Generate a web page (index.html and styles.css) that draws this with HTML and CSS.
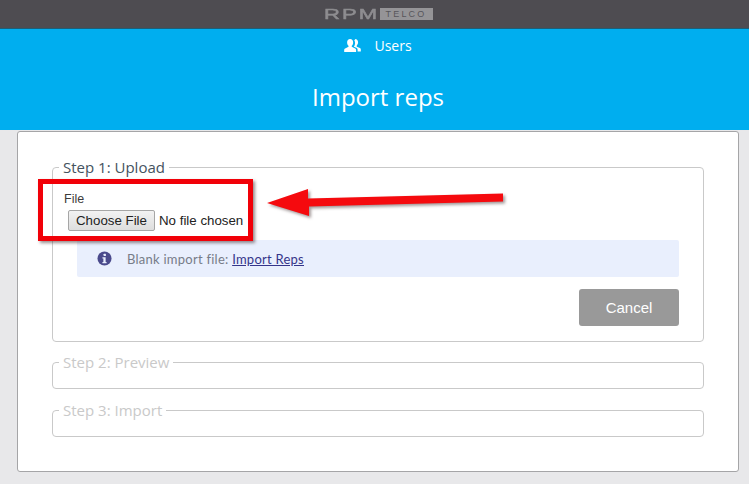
FILE: index.html
```
<!DOCTYPE html>
<html lang="en">
<head>
<meta charset="utf-8">
<title>Import reps</title>
<link rel="stylesheet" href="styles.css">
</head>
<body>
<header class="topbar">
  <div class="logo"><span class="logo-rpm">RPM</span><span class="logo-telco">TELCO</span></div>
</header>
<section class="hero">
  <nav class="crumb">
    <svg class="users-icon" viewBox="0 0 18 15" width="17" height="15" aria-hidden="true"><path fill="#fff" d="M6.500 0.600c2 0 3.200 1.500 3.200 3.600 0 1.400-.6 2.800-1.500 3.500v1.200l3.600 1.700c.8.4 1 .9 1 1.600v2.200H.2v-2.200c0-.7.2-1.200 1-1.600l3.600-1.700V7.700C3.900 7 3.300 5.600 3.300 4.200c0-2.100 1.200-3.600 3.200-3.600z"/><path fill="#fff" d="M11.800 0.600c1.900 0 3.100 1.500 3.100 3.500 0 1.300-.5 2.600-1.400 3.300v1.300l3.300 1.500c.7.300 1 .8 1 1.500v2.200h-3.400v-1.800c0-1-.5-1.700-1.400-2.100l-2.600-1.200c.8-1 1.300-2.400 1.300-3.900 0-1.100-.3-2-.8-2.900.6-.9 1.500-1.400 2.700-1.400z"/></svg>
    <span>Users</span>
  </nav>
  <h1>Import reps</h1>
</section>
<main class="page">
  <div class="card">
    <fieldset class="step step-active">
      <legend>Step 1: Upload</legend>
      <div class="step-body">
        <div class="file-block">
          <label class="file-label">File</label>
          <div class="file-row"><button class="choose" type="button">Choose File</button><span class="no-file">No file chosen</span></div>
        </div>
        <div class="info">
          <svg class="info-icon" viewBox="0 0 16 16" width="15" height="15" aria-hidden="true"><circle cx="8" cy="8" r="7.500" fill="#4a4a8c"/><rect x="7" y="3" width="2.600" height="2.400" rx=".5" fill="#e8eefc"/><path fill="#e8eefc" d="M5.800 6.600h3.400v5.200h1v1.400H5.800v-1.400h1V8H5.800z"/></svg>
          <span>Blank import file: <a href="#">Import Reps</a></span>
        </div>
        <div class="actions"><button class="cancel" type="button">Cancel</button></div>
      </div>
    </fieldset>
    <fieldset class="step step-off"><legend>Step 2: Preview</legend></fieldset>
    <fieldset class="step step-off"><legend>Step 3: Import</legend></fieldset>
  </div>
</main>
<div class="callout-box"></div>
<svg class="callout-arrow" viewBox="0 0 240 34" width="240" height="34" aria-hidden="true">
  <path class="arrow-fill" d="M1 17 L42 3 L42 12.500 L237 7.500 L237 15.500 L43 20.500 L43 30 Z"/>
</svg>
</body>
</html>
```
FILE: styles.css
```
* { box-sizing: border-box; }
html, body { margin: 0; height: 484px; overflow: hidden; }
body { position: relative; background: #e8e8ea; font-family: "Open Sans", sans-serif; color: #3c4a54; }

.topbar { height: 29px; background: #4e4c51; border-bottom: 1px solid #1c5f78; display: flex; justify-content: center; align-items: center; padding-bottom: 1px; padding-left: 7px; }
.logo { display: flex; align-items: center; gap: 3px; }
.logo-rpm { width: 53px; font-family: "Liberation Sans", sans-serif; font-size: 15.500px; line-height: 13px; letter-spacing: 1.500px; color: #8e8d90; transform: scaleX(1.420); transform-origin: left center; -webkit-text-stroke: .5px #8e8d90; }
.logo-telco { width: 53px; height: 12px; background: #959497; color: #57565b; font-family: "Liberation Sans", sans-serif; font-size: 9px; line-height: 12px; letter-spacing: 2.200px; text-align: center; }

.hero { height: 101px; background: #00aeef; color: #fff; text-align: center; padding-left: 7px; }
.crumb { height: 33px; display: flex; justify-content: center; align-items: center; gap: 13px; font-size: 14px; }
h1 { margin: 18px 0 0; font-size: 24px; font-weight: 400; line-height: 34px; }

.page { padding: 1px 10px 0 17px; }
.card { height: 341px; background: #fff; border: 1px solid #a5a5a7; border-radius: 3px; padding: 26px 34px 0; display: flex; flex-direction: column; }

.step { margin: 0; padding: 0; border: 1px solid #c9c9c9; border-radius: 4px; min-width: 0; }
.step legend { margin-left: 6px; padding: 0 4px; font-size: 15px; line-height: 19px; }
.step-active { height: 184px; color: #44525e; }
.step-off { height: 36px; margin-top: 12px; color: #c9c9c9; }
.step-active + .step-off { margin-top: 11px; }
.step-body { padding: 0 24px 0 11px; }

.file-block { height: 60px; padding-top: 15px; font-family: "Liberation Sans", sans-serif; font-size: 12.500px; }
.file-label { display: block; line-height: 14px; color: #3b3b3b; }
.file-row { display: flex; align-items: center; padding-left: 4px; margin-top: 4px; }
.choose { width: 87px; height: 21px; padding: 0; background: linear-gradient(#f2f2f2, #dedede); border: 1px solid #a6a6a6; border-radius: 2px; font-family: "Liberation Sans", sans-serif; font-size: 13.300px; line-height: 19px; color: #222; }
.no-file { margin-left: 4px; font-size: 13.300px; color: #222; }

.info { height: 37px; margin-left: 13px; margin-top: 3px; padding-left: 20px; background: #e9effd; border-radius: 2px; display: flex; align-items: center; gap: 15px; font-family: "Lato", sans-serif; font-size: 13px; color: #777c88; letter-spacing: .25px; }
.info a { color: #35358a; }
.actions { display: flex; justify-content: flex-end; margin-top: 12px; }
.cancel { width: 100px; height: 37px; padding: 0; background: #999; border: 0; border-radius: 3px; color: #fff; font-family: "Liberation Sans", sans-serif; font-size: 15px; }

.callout-box { position: absolute; left: 38px; top: 179px; width: 215px; height: 62px; border: 5px solid #f10008; box-shadow: 2px 2px 3px rgba(70, 50, 50, .55); }
.callout-arrow { position: absolute; left: 266px; top: 186px; overflow: visible; }
.arrow-fill { fill: #f50a0e; filter: drop-shadow(2px 2px 1.500px rgba(70, 50, 50, .5)); }
```
